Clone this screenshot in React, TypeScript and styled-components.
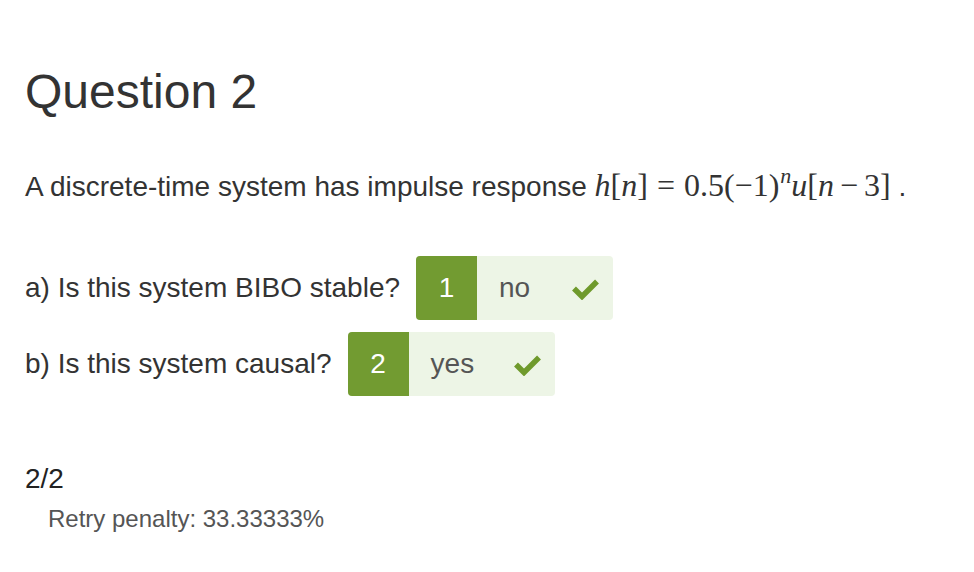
import React from "react";
import styled, { createGlobalStyle } from "styled-components";

const GlobalStyle = createGlobalStyle`
  html, body {
    margin: 0;
    padding: 0;
    background: #ffffff;
  }
  body {
    font-family: "Liberation Sans", Arial, Helvetica, sans-serif;
    color: #333333;
  }
`;

const Page = styled.div`
  padding: 64px 25px 0 25px;
`;

const Title = styled.h1`
  margin: 0 0 45px 0;
  font-size: 48px;
  font-weight: 400;
  line-height: 56px;
  color: #333333;
`;

const Prompt = styled.p`
  margin: 0 0 51px 0;
  font-size: 28px;
  line-height: 40px;
  height: 40px;
`;

const Math = styled.span`
  font-family: "Liberation Serif", "DejaVu Serif", "Times New Roman", serif;
  font-size: 32px;
  white-space: nowrap;
`;

const Var = styled.i`
  font-style: italic;
`;

const Op = styled.span`
  padding: 0 ${(p: { $space: number }) => p.$space}px;
`;

const Sup = styled.sup`
  font-size: 22px;
  font-style: italic;
  vertical-align: 13px;
  line-height: 0;
  padding-left: 1px;
`;

const Questions = styled.div`
  display: flex;
  flex-direction: column;
  gap: 12px;
`;

const Row = styled.div`
  display: flex;
  align-items: center;
  gap: 16px;
  font-size: 28px;
`;

const Answer = styled.div`
  display: flex;
  height: 64px;
  border-radius: 4px;
  overflow: hidden;
  background: #edf5e6;
`;

const Badge = styled.div`
  width: 61px;
  display: flex;
  align-items: center;
  justify-content: center;
  background: #729b31;
  color: #ffffff;
  font-size: 28px;
`;

const AnswerText = styled.div`
  display: flex;
  align-items: center;
  gap: ${(p: { $gap: number }) => p.$gap}px;
  padding: 0 13px 0 22px;
  color: #555555;
  font-size: 28px;
`;

const Score = styled.div`
  margin-top: 67px;
  font-size: 28px;
  line-height: 32px;
  color: #222222;
`;

const Penalty = styled.div`
  margin: 10px 0 0 23px;
  font-size: 24px;
  line-height: 28px;
  color: #555555;
`;

function Check() {
  return (
    <svg width="29" height="23" viewBox="0 0 29 23" aria-hidden="true">
      <path
        d="M3 11.5 L11 19.5 L26 4.5"
        fill="none"
        stroke="#6f9a2c"
        strokeWidth="5.5"
        strokeLinecap="butt"
        strokeLinejoin="miter"
      />
    </svg>
  );
}

function AnswerBox(props: { n: number; text: string; gap: number }) {
  return (
    <Answer>
      <Badge>{props.n}</Badge>
      <AnswerText $gap={props.gap}>
        <span>{props.text}</span>
        <Check />
      </AnswerText>
    </Answer>
  );
}

export default function App() {
  return (
    <>
      <GlobalStyle />
      <Page>
        <Title>Question 2</Title>
        <Prompt>
          A discrete-time system has impulse response{" "}
          <Math>
            <Var>h</Var>[<Var>n</Var>]<Op $space={9}>=</Op>0.5(−1)
            <Sup>n</Sup>
            <Var>u</Var>[<Var>n</Var>
            <Op $space={6}>−</Op>3]
          </Math>
          {" "}.
        </Prompt>
        <Questions>
          <Row>
            <span>a) Is this system BIBO stable?</span>
            <AnswerBox n={1} text="no" gap={41} />
          </Row>
          <Row>
            <span>b) Is this system causal?</span>
            <AnswerBox n={2} text="yes" gap={39} />
          </Row>
        </Questions>
        <Score>2/2</Score>
        <Penalty>Retry penalty: 33.33333%</Penalty>
      </Page>
    </>
  );
}
